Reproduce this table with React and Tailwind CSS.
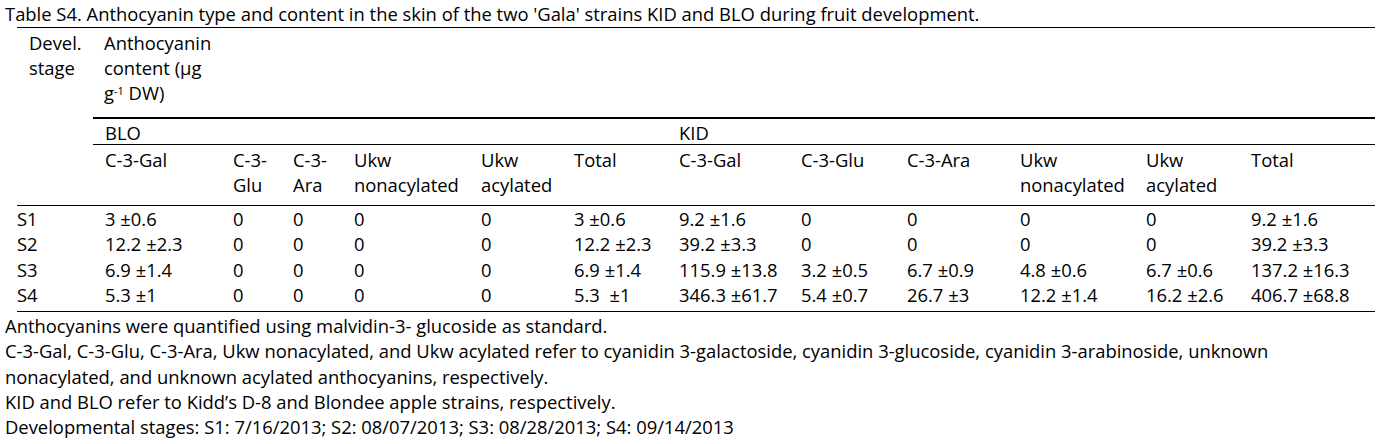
const COLS =
	'grid grid-cols-[76px_128px_60px_61px_127px_93px_105px_122px_106px_113px_126px_105px_136px]'

const rows = [
	['S1', '3 ±0.6', '0', '0', '0', '0', '3 ±0.6', '9.2 ±1.6', '0', '0', '0', '0', '9.2 ±1.6'],
	['S2', '12.2 ±2.3', '0', '0', '0', '0', '12.2 ±2.3', '39.2 ±3.3', '0', '0', '0', '0', '39.2 ±3.3'],
	['S3', '6.9 ±1.4', '0', '0', '0', '0', '6.9 ±1.4', '115.9 ±13.8', '3.2 ±0.5', '6.7 ±0.9', '4.8 ±0.6', '6.7 ±0.6', '137.2 ±16.3'],
	['S4', '5.3 ±1', '0', '0', '0', '0', '5.3  ±1', '346.3 ±61.7', '5.4 ±0.7', '26.7 ±3', '12.2 ±1.4', '16.2 ±2.6', '406.7 ±68.8'],
]

// second header row, column names
const heads = [
	['C-3-Gal'],
	['C-3-', 'Glu'],
	['C-3-', 'Ara'],
	['Ukw', 'nonacylated'],
	['Ukw', 'acylated'],
	['Total'],
	['C-3-Gal'],
	['C-3-Glu'],
	['C-3-Ara'],
	['Ukw', 'nonacylated'],
	['Ukw', 'acylated'],
	['Total'],
]

export default function App() {
	return (
		<div className="w-[1384px] h-[444px] bg-white text-black font-['Open_Sans',sans-serif] text-[18.4px] leading-[25.3px] overflow-hidden">
			<p className="h-[27px] pl-[5px] pt-[1px] whitespace-nowrap">
				Table S4. Anthocyanin type and content in the skin of the two 'Gala' strains KID and BLO
				during fruit development.
			</p>

			<div className="ml-[17px] w-[1358px] border-t border-black">
				{/* top header */}
				<div className={`${COLS} h-[89px] pt-[1.5px]`}>
					<div className="pl-[12px]">
						Devel.
						<br />
						stage
					</div>
					<div className="pl-[11px] whitespace-nowrap">
						Anthocyanin
						<br />
						content (µg
						<br />g<sup className="text-[11px]">-1</sup> DW)
					</div>
				</div>

				{/* strains */}
				<div className={COLS}>
					<div />
					<div className="col-span-12 grid grid-cols-[574px_708px] border-t-2 border-b border-black h-[28px] pt-[0.5px]">
						<div className="pl-[12px]">BLO</div>
						<div className="pl-[12px]">KID</div>
					</div>
				</div>

				{/* column names */}
				<div className={`${COLS} h-[61px] pt-[1.5px] border-b border-black`}>
					<div />
					{heads.map((h, i) => (
						<div key={i} className="pl-[12px] whitespace-nowrap">
							{h[0]}
							{h[1] && (
								<>
									<br />
									{h[1]}
								</>
							)}
						</div>
					))}
				</div>

				{/* data */}
				<div className="pb-[4px] border-b-[1.5px] border-black">
					{rows.map(r => (
						<div key={r[0]} className={COLS}>
							{r.map((c, i) => (
								<div key={i} className={`whitespace-pre ${i === 0 ? '' : 'pl-[12px]'}`}>
									{c}
								</div>
							))}
						</div>
					))}
				</div>
			</div>

			<div className="pl-[5px] pt-[1px] whitespace-nowrap">
				<p>Anthocyanins were quantified using malvidin-3- glucoside as standard.</p>
				<p>
					C-3-Gal, C-3-Glu, C-3-Ara, Ukw nonacylated, and Ukw acylated refer to cyanidin
					3-galactoside, cyanidin 3-glucoside, cyanidin 3-arabinoside, unknown
				</p>
				<p>nonacylated, and unknown acylated anthocyanins, respectively.</p>
				<p>KID and BLO refer to Kidd’s D-8 and Blondee apple strains, respectively.</p>
				<p>Developmental stages: S1: 7/16/2013; S2: 08/07/2013; S3: 08/28/2013; S4: 09/14/2013</p>
			</div>
		</div>
	)
}
